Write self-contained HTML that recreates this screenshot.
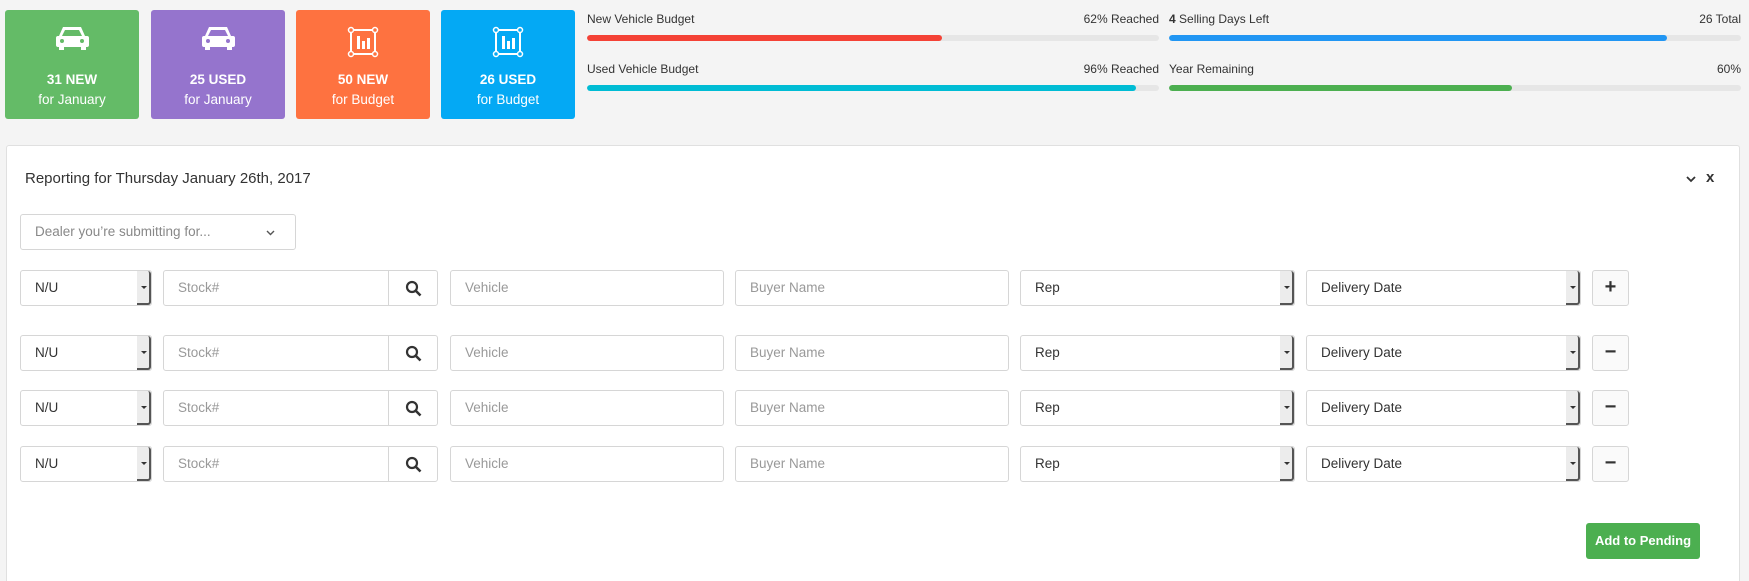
<!DOCTYPE html>
<html><head><meta charset="utf-8"><style>
*{box-sizing:border-box;margin:0;padding:0}
html,body{width:1749px;height:581px;overflow:hidden}
body{background:#f4f4f4;font-family:"Liberation Sans",sans-serif;position:relative;color:#333}
.box{position:absolute;top:10px;height:109px;width:134px;border-radius:3px;color:#fff;text-align:center;font-size:13.5px;line-height:20px}
.box svg{position:absolute;left:50%;top:18px;transform:translateX(-50%)}
.box .t{position:absolute;top:60px;left:0;right:0}
.box b{font-weight:bold}
.pl{position:absolute;font-size:12px;color:#333}
.bar{position:absolute;height:6px;border-radius:3px;background:#e6e6e6;overflow:hidden}
.bar i{display:block;height:100%;border-radius:3px}
.panel{position:absolute;left:6px;top:145px;width:1734px;height:436px;background:#fff;border:1px solid #e0e0e0;border-bottom:none;border-radius:3px 3px 0 0}
.f{position:absolute;height:36px;border:1px solid #d6d6d6;border-radius:3px;background:#fff;font-size:13.5px;line-height:34px;padding-left:14px;color:#999}
.sel{color:#333}
.sel .dd{position:absolute;right:0;top:0;width:14px;height:34px;background:#ececec;border-right:2px solid #555;border-bottom:2px solid #555;border-radius:0 3px 3px 0}
.sel .dd:after{content:"";position:absolute;left:4px;top:15px;border:3px solid transparent;border-top:3px solid #333}
.srch{position:absolute;right:0;top:0;width:49px;height:34px;border-left:1px solid #d6d6d6}
.btn{position:absolute;width:37px;height:36px;border:1px solid #d6d6d6;border-radius:3px;background:#fafafa;font-weight:bold;font-size:20px;text-align:center;line-height:33px;color:#333}
</style></head><body>

<div class="box" style="left:5px;background:#64bb67">
<svg width="34" height="26" viewBox="0 0 34 26" style="top:16px"><path d="M8 1h18l4 9h2a2 2 0 0 1 2 2v7a2 2 0 0 1-2 2h-1v3h-5v-3H9v3H4v-3H3a2 2 0 0 1-2-2v-7a2 2 0 0 1 2-2h1z" fill="#fff"/><path d="M10 4h14l3 6H7z" fill="#64bb67"/><circle cx="7" cy="15" r="2" fill="#64bb67"/><circle cx="27" cy="15" r="2" fill="#64bb67"/></svg>
<div class="t"><b>31 NEW</b><br>for January</div></div>
<div class="box" style="left:151px;background:#9574cd">
<svg width="34" height="26" viewBox="0 0 34 26" style="top:16px"><path d="M8 1h18l4 9h2a2 2 0 0 1 2 2v7a2 2 0 0 1-2 2h-1v3h-5v-3H9v3H4v-3H3a2 2 0 0 1-2-2v-7a2 2 0 0 1 2-2h1z" fill="#fff"/><path d="M10 4h14l3 6H7z" fill="#9574cd"/><circle cx="7" cy="15" r="2" fill="#9574cd"/><circle cx="27" cy="15" r="2" fill="#9574cd"/></svg>
<div class="t"><b>25 USED</b><br>for January</div></div>
<div class="box" style="left:296px;background:#fe7240">
<svg width="32" height="32" viewBox="0 0 32 32" style="top:16px"><rect x="4" y="4" width="24" height="24" fill="none" stroke="#fff" stroke-width="2"/><g fill="#fe7240" stroke="#fff" stroke-width="1.5"><circle cx="4" cy="4" r="2.5"/><circle cx="28" cy="4" r="2.5"/><circle cx="4" cy="28" r="2.5"/><circle cx="28" cy="28" r="2.5"/></g><path d="M10 10h3v13h-3zM15 15h3v8h-3zM20 12h3v11h-3z" fill="#fff"/></svg>
<div class="t"><b>50 NEW</b><br>for Budget</div></div>
<div class="box" style="left:441px;background:#04a9f4">
<svg width="32" height="32" viewBox="0 0 32 32" style="top:16px"><rect x="4" y="4" width="24" height="24" fill="none" stroke="#fff" stroke-width="2"/><g fill="#04a9f4" stroke="#fff" stroke-width="1.5"><circle cx="4" cy="4" r="2.5"/><circle cx="28" cy="4" r="2.5"/><circle cx="4" cy="28" r="2.5"/><circle cx="28" cy="28" r="2.5"/></g><path d="M10 10h3v13h-3zM15 15h3v8h-3zM20 12h3v11h-3z" fill="#fff"/></svg>
<div class="t"><b>26 USED</b><br>for Budget</div></div>

<div class="pl" style="left:587px;top:12px">New Vehicle Budget</div>
<div class="pl" style="left:587px;top:12px;width:572px;text-align:right">62% Reached</div>
<div class="bar" style="left:587px;top:35px;width:572px"><i style="width:62%;background:#f44236"></i></div>
<div class="pl" style="left:587px;top:62px">Used Vehicle Budget</div>
<div class="pl" style="left:587px;top:62px;width:572px;text-align:right">96% Reached</div>
<div class="bar" style="left:587px;top:85px;width:572px"><i style="width:96%;background:#00bcd4"></i></div>

<div class="pl" style="left:1169px;top:12px"><b>4</b> Selling Days Left</div>
<div class="pl" style="left:1169px;top:12px;width:572px;text-align:right">26 Total</div>
<div class="bar" style="left:1169px;top:35px;width:572px"><i style="width:87%;background:#2196f3"></i></div>
<div class="pl" style="left:1169px;top:62px">Year Remaining</div>
<div class="pl" style="left:1169px;top:62px;width:572px;text-align:right">60%</div>
<div class="bar" style="left:1169px;top:85px;width:572px"><i style="width:60%;background:#4caf50"></i></div>

<div class="panel"></div>
<div style="position:absolute;left:25px;top:170px;font-size:15px;color:#333">Reporting for Thursday January 26th, 2017</div>
<svg style="position:absolute;left:1686px;top:175px" width="10" height="8" viewBox="0 0 10 8"><path d="M1 2l4 4 4-4" fill="none" stroke="#333" stroke-width="1.8"/></svg>
<div style="position:absolute;left:1706px;top:169px;font-size:15px;font-weight:bold;color:#333">x</div>

<div class="f" style="left:20px;top:214px;width:276px;color:#888">Dealer you’re submitting for...<svg style="position:absolute;right:20px;top:15px" width="9" height="6" viewBox="0 0 9 6"><path d="M1 1l3.5 3.5L8 1" fill="none" stroke="#555" stroke-width="1.4"/></svg></div>

<div id="rows"></div>
<script>
var tops=[270,335,390,446],h='';
tops.forEach(function(t,i){
h+='<div class="f sel" style="left:20px;top:'+t+'px;width:132px">N/U<span class="dd"></span></div>';
h+='<div class="f" style="left:163px;top:'+t+'px;width:275px">Stock#<span class="srch"><svg style="position:absolute;left:16px;top:9px" width="17" height="17" viewBox="0 0 17 17"><circle cx="7" cy="7" r="5" fill="none" stroke="#333" stroke-width="2.2"/><path d="M11 11l4.5 4.5" stroke="#333" stroke-width="2.6"/></svg></span></div>';
h+='<div class="f" style="left:450px;top:'+t+'px;width:274px">Vehicle</div>';
h+='<div class="f" style="left:735px;top:'+t+'px;width:274px">Buyer Name</div>';
h+='<div class="f sel" style="left:1020px;top:'+t+'px;width:275px">Rep<span class="dd"></span></div>';
h+='<div class="f sel" style="left:1306px;top:'+t+'px;width:275px">Delivery Date<span class="dd"></span></div>';
h+='<div class="btn" style="left:1592px;top:'+t+'px">'+(i==0?'+':'&minus;')+'</div>';
});
document.getElementById('rows').innerHTML=h;
</script>
<div style="position:absolute;left:1586px;top:523px;width:114px;height:36px;background:#4caf50;border-radius:3px;color:#fff;font-size:13px;font-weight:bold;text-align:center;line-height:36px">Add to Pending</div>
</body></html>
